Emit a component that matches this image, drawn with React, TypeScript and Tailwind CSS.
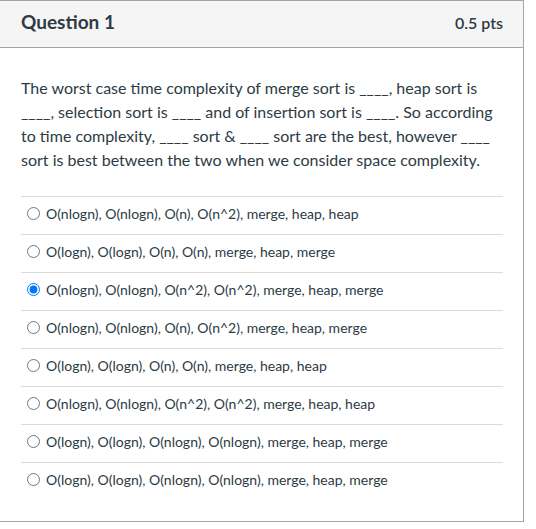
const answers = [
  'O(nlogn), O(nlogn), O(n), O(n^2), merge, heap, heap',
  'O(logn), O(logn), O(n), O(n), merge, heap, merge',
  'O(nlogn), O(nlogn), O(n^2), O(n^2), merge, heap, merge',
  'O(nlogn), O(nlogn), O(n), O(n^2), merge, heap, merge',
  'O(logn), O(logn), O(n), O(n), merge, heap, heap',
  'O(nlogn), O(nlogn), O(n^2), O(n^2), merge, heap, heap',
  'O(logn), O(logn), O(nlogn), O(nlogn), merge, heap, merge',
  'O(logn), O(logn), O(nlogn), O(nlogn), merge, heap, merge',
]

export default function App() {
  return (
    <div className="w-[536px] h-[529px] bg-white text-[#2d3b45]" style={{ fontFamily: 'Lato, "Liberation Sans", sans-serif' }}>
      <div className="w-[524px] h-[522px] border-t border-r border-b border-[#a5a5a5] flex flex-col">
        {/* Header */}
        <div className="h-[47px] shrink-0 bg-[#f5f5f5] border-b border-[#a5a5a5] flex items-center justify-between pl-[21px] pr-[20px] pb-[3px]">
          <span className="text-[19px] font-bold">Question 1</span>
          <span className="text-[16px] font-semibold">0.5 pts</span>
        </div>

        {/* Body */}
        <div className="pl-[21px] pr-[20px] pt-[28px]">
          <p className="text-[16px] leading-[24px] mb-[24px]">
            The worst case time complexity of merge sort is ____, heap sort is ____, selection sort is ____ and of insertion sort is ____. So according to time complexity, ____ sort &amp; ____ sort are the best, however ____ sort is best between the two when we consider space complexity.
          </p>

          <div className="flex flex-col">
            {answers.map((a, i) => (
              <label key={i} className="h-[38px] border-t border-[#dadada] flex items-center gap-[6px] pl-[6px] pb-[4px] text-[14px]">
                <input
                  type="radio"
                  name="q1"
                  checked={i === 2}
                  onChange={() => {}}
                  className="w-[13px] h-[13px] m-0"
                />
                <span>{a}</span>
              </label>
            ))}
          </div>
        </div>
      </div>
    </div>
  )
}
